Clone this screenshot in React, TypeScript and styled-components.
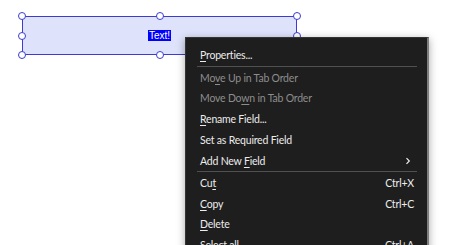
import styled, { createGlobalStyle } from 'styled-components';

// GLOBAL
const GlobalStyle = createGlobalStyle`
  html, body {
    margin: 0;
    padding: 0;
    background: #ffffff;
  }
  body {
    width: 474px;
    height: 245px;
    overflow: hidden;
  }
`;

// STYLES
const Canvas = styled.div`
  position: relative;
  width: 474px;
  height: 245px;
  background: #ffffff;
  overflow: hidden;
`;

const FieldBox = styled.div`
  position: absolute;
  left: 22px;
  top: 16px;
  width: 275px;
  height: 39px;
  box-sizing: border-box;
  border: 1.5px solid #3c3cd2;
  background: #dee3fb;
  display: flex;
  align-items: center;
  justify-content: center;
`;

const SelectedText = styled.span`
  background: #0000ff;
  color: #ffffff;
  font-family: 'Liberation Sans', Arial, sans-serif;
  font-size: 10px;
  line-height: 11px;
  padding: 0 1px;
`;

const Handle = styled.span<{ $x: string; $y: string }>`
  position: absolute;
  left: ${(p) => p.$x};
  top: ${(p) => p.$y};
  width: 6px;
  height: 6px;
  margin: -4px 0 0 -4px;
  border-radius: 50%;
  border: 1.3px solid #3c3cd2;
  background: #ffffff;
`;

const Menu = styled.nav`
  position: absolute;
  left: 185px;
  top: 37px;
  width: 244px;
  box-sizing: border-box;
  padding-top: 7px;
  background: #1e1e1e;
  border: 1px solid #343434;
  border-right: 2px solid #7e7e7e;
  box-shadow: 0 2px 8px rgba(0, 0, 0, 0.35);
  font-family: Lato, 'Noto Sans', sans-serif;
  font-size: 10.5px;
  letter-spacing: -0.2px;
`;

const Item = styled.div<{ $disabled?: boolean }>`
  height: 20.75px;
  display: flex;
  align-items: center;
  padding: 0 13px 0 14px;
  color: ${(p) => (p.$disabled ? '#8d8d8d' : '#ececec')};
`;

const Label = styled.span`
  flex: 1;
`;

const Shortcut = styled.span`
  color: #ececec;
`;

const Separator = styled.div`
  height: 1px;
  margin: 0 10px 0.5px 11px;
  background: #505050;
`;

const Mn = styled.u`
  text-underline-offset: 1.5px;
  text-decoration-thickness: 1px;
`;

function Chevron() {
  return (
    <svg width="8" height="8" viewBox="0 0 8 8" style={{ marginRight: 2 }}>
      <path d="M2.5 1.2 L5.3 4 L2.5 6.8" fill="none" stroke="#ececec" strokeWidth="1.2" />
    </svg>
  );
}

export default function App() {
  return (
    <Canvas>
      <GlobalStyle />
      <FieldBox>
        <SelectedText>Text!</SelectedText>
      </FieldBox>
      <Handle $x="22px" $y="16px" />
      <Handle $x="160px" $y="16px" />
      <Handle $x="297px" $y="16px" />
      <Handle $x="22px" $y="36px" />
      <Handle $x="297px" $y="36px" />
      <Handle $x="22px" $y="55px" />
      <Handle $x="160px" $y="55px" />
      <Handle $x="297px" $y="55px" />

      <Menu>
        <Item>
          <Label><Mn>P</Mn>roperties...</Label>
        </Item>
        <Separator />
        <Item $disabled>
          <Label>Mo<Mn>v</Mn>e Up in Tab Order</Label>
        </Item>
        <Item $disabled>
          <Label>Move Do<Mn>w</Mn>n in Tab Order</Label>
        </Item>
        <Item>
          <Label><Mn>R</Mn>ename Field...</Label>
        </Item>
        <Item>
          <Label>Set as Required Field</Label>
        </Item>
        <Item>
          <Label>Add New <Mn>F</Mn>ield</Label>
          <Chevron />
        </Item>
        <Separator />
        <Item>
          <Label>Cu<Mn>t</Mn></Label>
          <Shortcut>Ctrl+X</Shortcut>
        </Item>
        <Item>
          <Label><Mn>C</Mn>opy</Label>
          <Shortcut>Ctrl+C</Shortcut>
        </Item>
        <Item>
          <Label><Mn>D</Mn>elete</Label>
        </Item>
        <Item>
          <Label>Select all</Label>
          <Shortcut>Ctrl+A</Shortcut>
        </Item>
      </Menu>
    </Canvas>
  );
}
